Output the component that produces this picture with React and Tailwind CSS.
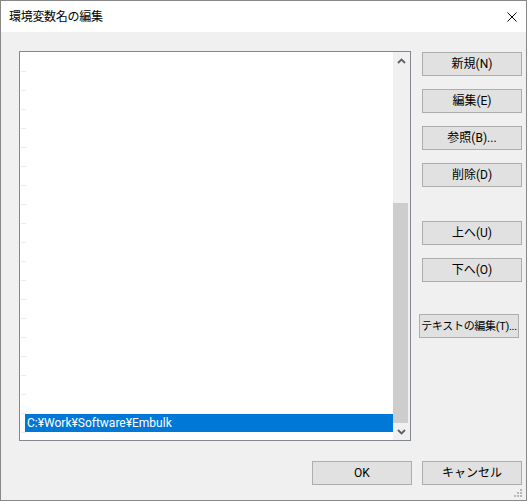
import React from "react";

const FONT = { fontFamily: 'Roboto, "Noto Sans CJK JP", sans-serif' };

function Btn({ children, className = "" }) {
  return (
    <div
      className={
        "w-[100px] h-[24px] border border-[#adadad] bg-[#e1e1e1] flex items-center justify-center text-black leading-none whitespace-nowrap " +
        className
      }
    >
      {children}
    </div>
  );
}

function Row({ selected, text }) {
  return (
    <div className="h-[19px] flex flex-col">
      <div className="h-[18px] flex">
        <div className="w-[5px]" />
        <div
          className={
            "flex-1 flex items-center pl-[2px] text-[12px] leading-none " +
            (selected ? "bg-[#0078d7] text-white" : "")
          }
        >
          {text}
        </div>
      </div>
      <div className="h-px w-[5px] ml-[1px] bg-[#ebebeb]" />
    </div>
  );
}

function Chevron({ up }) {
  return (
    <svg width="9" height="6" viewBox="0 0 9 6">
      <path
        d={up ? "M1 5 L4.5 1.5 L8 5" : "M1 1 L4.5 4.5 L8 1"}
        fill="none"
        stroke="#606060"
        strokeWidth="1.8"
      />
    </svg>
  );
}

export default function App() {
  const rows = Array.from({ length: 19 });
  return (
    <div className="w-[528px] h-[502px] bg-white" style={FONT}>
      <div className="relative w-[527px] h-[501px] border border-[#888888] bg-[#f0f0f0] flex flex-col">
        {/* title bar */}
        <div className="h-[31px] bg-white flex items-center justify-between pl-[8px] pr-[9px] shrink-0">
          <span className="text-[12px] text-black leading-none tracking-[-0.3px]">環境変数名の編集</span>
          <svg width="10" height="10" viewBox="0 0 10 10">
            <path d="M0.5 0.5 L9.5 9.5 M9.5 0.5 L0.5 9.5" stroke="#000" strokeWidth="1" />
          </svg>
        </div>
        {/* body */}
        <div className="flex pl-[18px] pt-[19px]">
          {/* list box */}
          <div className="w-[392px] h-[390px] border border-[#828790] bg-white flex">
            <div className="flex-1 flex flex-col">
              <div className="h-px" />
              {rows.map((_, i) => (
                <Row key={i} />
              ))}
              <Row selected text="C:¥Work¥Software¥Embulk" />
            </div>
            <div className="w-[17px] bg-[#f0f0f0] flex flex-col">
              <div className="h-[17px] flex items-center justify-center">
                <Chevron up />
              </div>
              <div className="flex-1" />
              <div className="h-[220px] w-[15px] bg-[#cdcdcd]" />
              <div className="h-[17px] flex items-center justify-center">
                <Chevron />
              </div>
            </div>
          </div>
          {/* buttons */}
          <div className="ml-[11px] pt-[1px] flex flex-col text-[12px]">
            <Btn>新規(N)</Btn>
            <Btn className="mt-[13px]">編集(E)</Btn>
            <Btn className="mt-[13px]">参照(B)...</Btn>
            <Btn className="mt-[13px]">削除(D)</Btn>
            <Btn className="mt-[34px]">上へ(U)</Btn>
            <Btn className="mt-[13px]">下へ(O)</Btn>
            <Btn className="mt-[32px] -ml-[3px] text-[11px] tracking-[-0.3px]">テキストの編集(T)...</Btn>
          </div>
        </div>
        {/* bottom buttons */}
        <div className="flex justify-end gap-[10px] pr-[4px] mt-[20px] text-[12px]">
          <Btn>OK</Btn>
          <Btn>キャンセル</Btn>
        </div>
        {/* size grip */}
        <svg className="absolute right-[3px] bottom-[2px]" width="9" height="9" viewBox="0 0 9 9">
          <rect x="6" y="0" width="2" height="2" fill="#b8b8b8" />
          <rect x="3" y="3" width="2" height="2" fill="#b8b8b8" />
          <rect x="6" y="3" width="2" height="2" fill="#b8b8b8" />
          <rect x="0" y="6" width="2" height="2" fill="#b8b8b8" />
          <rect x="3" y="6" width="2" height="2" fill="#b8b8b8" />
          <rect x="6" y="6" width="2" height="2" fill="#b8b8b8" />
        </svg>
      </div>
    </div>
  );
}
